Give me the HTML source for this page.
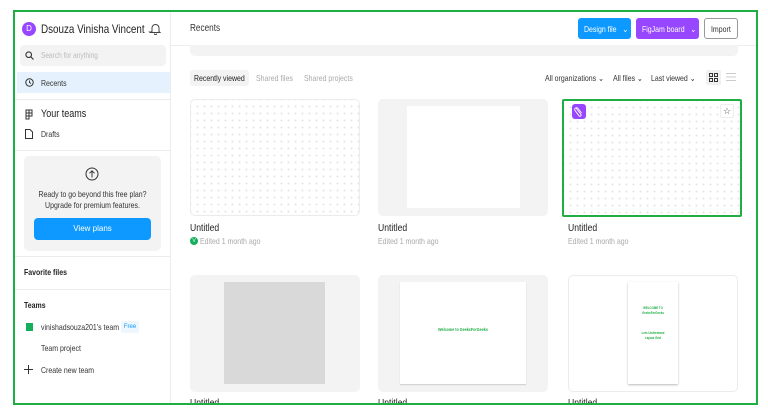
<!DOCTYPE html>
<html><head><meta charset="utf-8"><style>
*{box-sizing:border-box;margin:0;padding:0}
body{width:768px;height:415px;background:#fff;font-family:"Liberation Sans",Arial,sans-serif;color:#333;position:relative;overflow:hidden}
.a{position:absolute}
.t{position:absolute;white-space:nowrap;line-height:1;transform:scaleX(.82);transform-origin:left center}
.c{transform-origin:center center}
.dots{background-color:#fff;background-image:radial-gradient(circle,#e6e6e6 0.8px,transparent 1.2px);background-size:7px 7px;background-position:3px 3px}
.hl{position:absolute;left:15px;width:155px;height:1px;background:#ececec}
</style></head><body>
<div class="a" style="left:13px;top:10px;width:745px;height:395px;border:2px solid #1fae44"></div>
<div class="a" style="left:170px;top:12px;width:1px;height:391px;background:#ececec"></div>
<div class="a" style="left:171px;top:45px;width:585px;height:1px;background:#ececec"></div>

<div class="a" style="left:22px;top:22px;width:14px;height:14px;border-radius:50%;background:#9747ff;color:#fff;font-size:8px;text-align:center;line-height:14px">D</div>
<div class="t" style="left:41px;top:23px;font-size:12px;color:#222">Dsouza Vinisha Vincent <span style="font-size:8px">⌄</span></div>
<svg class="a" style="left:150px;top:23px" width="11" height="12" viewBox="0 0 11 12"><path d="M2 8.5V5a3.5 3.5 0 0 1 7 0v3.5l1 1H1z M4.3 10.5a1.2 1.2 0 0 0 2.4 0" fill="none" stroke="#444" stroke-width="1"/></svg>
<div class="a" style="left:20px;top:45px;width:146px;height:21px;background:#f3f3f3;border-radius:4px"></div>
<svg class="a" style="left:25px;top:51px" width="9" height="9" viewBox="0 0 9 9"><circle cx="3.7" cy="3.7" r="2.8" fill="none" stroke="#333" stroke-width="1.1"/><path d="M5.8 5.8L8.5 8.5" stroke="#333" stroke-width="1.1"/></svg>
<div class="t" style="left:41px;top:52px;font-size:8px;color:#bbb">Search for anything</div>
<div class="a" style="left:17px;top:72px;width:153px;height:21px;background:#e5f2fd"></div>
<svg class="a" style="left:25px;top:78px" width="9" height="9" viewBox="0 0 9 9"><circle cx="4.5" cy="4.5" r="3.7" fill="none" stroke="#333" stroke-width="1"/><path d="M4.5 2.5v2l1.5 1" fill="none" stroke="#333" stroke-width="1"/></svg>
<div class="t" style="left:41px;top:79px;font-size:8.5px">Recents</div>
<div class="hl" style="top:99px"></div>
<svg class="a" style="left:25px;top:109px" width="8" height="11" viewBox="0 0 8 11"><path d="M1 1h6v3H1z M1 4h6v3H1z M1 7h3v3H1z M4 1v6" fill="none" stroke="#333" stroke-width="1"/></svg>
<div class="t" style="left:41px;top:109px;font-size:11px;color:#222">Your teams</div>
<svg class="a" style="left:25px;top:129px" width="8" height="10" viewBox="0 0 8 10"><path d="M0.5 0.5h4.5l2.5 2.5v6.5h-7z" fill="none" stroke="#333" stroke-width="1"/></svg>
<div class="t" style="left:41px;top:130px;font-size:8.5px">Drafts</div>
<div class="hl" style="top:150px"></div>
<div class="a" style="left:24px;top:156px;width:137px;height:95px;background:#f3f3f3;border-radius:5px"></div>
<svg class="a" style="left:85px;top:167px" width="14" height="14" viewBox="0 0 14 14"><circle cx="7" cy="7" r="6" fill="none" stroke="#333" stroke-width="1"/><path d="M7 10.5V4M4.5 6.3L7 3.8l2.5 2.5" fill="none" stroke="#333" stroke-width="1"/></svg>
<div class="t c" style="left:14px;width:157px;text-align:center;top:190px;font-size:8.5px">Ready to go beyond this free plan?</div>
<div class="t c" style="left:14px;width:157px;text-align:center;top:201px;font-size:8.5px">Upgrade for premium features.</div>
<div class="a" style="left:34px;top:218px;width:117px;height:22px;background:#0d99ff;border-radius:4px;color:#fff;font-size:8px;text-align:center;line-height:22px">View plans</div>
<div class="hl" style="top:256px"></div>
<div class="t" style="left:24px;top:268px;font-size:8.5px;font-weight:bold;color:#222">Favorite files</div>
<div class="hl" style="top:289px"></div>
<div class="t" style="left:24px;top:301px;font-size:8.5px;font-weight:bold;color:#222">Teams</div>
<div class="a" style="left:26px;top:323px;width:7px;height:8px;background:#14ae5c"></div>
<div class="t" style="left:41px;top:323px;font-size:8.5px">vinishadsouza201's team</div>
<div class="a" style="left:121px;top:321px;width:18px;height:12px;background:#eef6fe;border-radius:2px;color:#0d99ff;font-size:6px;text-align:center;line-height:12px">Free</div>
<div class="t" style="left:41px;top:344px;font-size:8.5px">Team project</div>
<div class="a" style="left:24px;top:369px;width:9px;height:1px;background:#333"></div>
<div class="a" style="left:28px;top:365px;width:1px;height:9px;background:#333"></div>
<div class="t" style="left:41px;top:366px;font-size:8.5px">Create new team</div>

<div class="t" style="left:190px;top:24px;font-size:10px;color:#333">Recents</div>
<div class="a" style="left:578px;top:18px;width:53px;height:21px;background:#0d99ff;border-radius:3px"></div>
<div class="t" style="left:584px;top:25px;font-size:8.5px;color:#fff">Design file &nbsp; ⌄</div>
<div class="a" style="left:636px;top:18px;width:63px;height:21px;background:#9747ff;border-radius:3px"></div>
<div class="t" style="left:642px;top:25px;font-size:8.5px;color:#fff">FigJam board &nbsp; ⌄</div>
<div class="a" style="left:704px;top:18px;width:34px;height:21px;border:1px solid #999;border-radius:3px"></div>
<div class="t" style="left:711px;top:25px;font-size:8.5px">Import</div>
<div class="a" style="left:190px;top:45px;width:548px;height:11px;background:#f3f3f3;border-radius:0 0 5px 5px"></div>

<div class="a" style="left:190px;top:70px;width:59px;height:16px;background:#f3f3f3;border-radius:3px"></div>
<div class="t" style="left:194px;top:74px;font-size:8.5px;color:#222">Recently viewed</div>
<div class="t" style="left:256px;top:74px;font-size:8.5px;color:#aaa">Shared files</div>
<div class="t" style="left:304px;top:74px;font-size:8.5px;color:#aaa">Shared projects</div>
<div class="t" style="left:545px;top:74px;font-size:8.5px">All organizations ⌄</div>
<div class="t" style="left:613px;top:74px;font-size:8.5px">All files ⌄</div>
<div class="t" style="left:651px;top:74px;font-size:8.5px">Last viewed ⌄</div>
<div class="a" style="left:706px;top:70px;width:15px;height:15px;background:#f0f0f0;border-radius:2px"></div>
<svg class="a" style="left:709px;top:73px" width="9" height="9" viewBox="0 0 9 9"><rect x=".5" y=".5" width="3" height="3" fill="none" stroke="#333"/><rect x="5.5" y=".5" width="3" height="3" fill="none" stroke="#333"/><rect x=".5" y="5.5" width="3" height="3" fill="none" stroke="#333"/><rect x="5.5" y="5.5" width="3" height="3" fill="none" stroke="#333"/></svg>
<svg class="a" style="left:726px;top:72px" width="10" height="10" viewBox="0 0 10 10"><path d="M0 1.5h10M0 5h10M0 8.5h10" stroke="#bbb" stroke-width="0.8"/></svg>

<div class="a dots" style="left:190px;top:99px;width:170px;height:117px;border:1px solid #ececec;border-radius:5px"></div>
<div class="a" style="left:378px;top:99px;width:170px;height:117px;background:#f3f3f3;border-radius:5px"></div>
<div class="a" style="left:407px;top:106px;width:113px;height:102px;background:#fff"></div>
<div class="a dots" style="left:562px;top:99px;width:180px;height:118px;border:2px solid #1fae44;border-radius:2px"></div>
<div class="a" style="left:572px;top:104px;width:14px;height:15px;background:#9747ff;border-radius:3px"></div>
<svg class="a" style="left:574px;top:106px" width="10" height="11" viewBox="0 0 10 11"><path d="M2 2l5 6.5a1.2 1.2 0 0 1-2 1.3L1 4.5a1.8 1.8 0 0 1 3-2l3.5 4.5" fill="none" stroke="#fff" stroke-width="0.9"/></svg>
<div class="a" style="left:720px;top:104px;width:14px;height:14px;background:#fff;border:1px solid #eee;border-radius:2px;font-size:9px;text-align:center;line-height:12px;color:#555">☆</div>

<div class="t" style="left:190px;top:223px;font-size:10.5px;color:#222">Untitled</div>
<div class="a" style="left:190px;top:237px;width:8px;height:8px;border-radius:50%;background:#14ae5c;color:#fff;font-size:5px;text-align:center;line-height:8px">V</div>
<div class="t" style="left:200px;top:237px;font-size:8.5px;color:#aaa">Edited 1 month ago</div>
<div class="t" style="left:378px;top:223px;font-size:10.5px;color:#222">Untitled</div>
<div class="t" style="left:378px;top:237px;font-size:8.5px;color:#aaa">Edited 1 month ago</div>
<div class="t" style="left:568px;top:223px;font-size:10.5px;color:#222">Untitled</div>
<div class="t" style="left:568px;top:237px;font-size:8.5px;color:#aaa">Edited 1 month ago</div>

<div class="a" style="left:190px;top:275px;width:170px;height:117px;background:#f3f3f3;border-radius:5px"></div>
<div class="a" style="left:224px;top:282px;width:101px;height:102px;background:#d9d9d9"></div>
<div class="a" style="left:378px;top:275px;width:170px;height:117px;background:#f3f3f3;border-radius:5px"></div>
<div class="a" style="left:400px;top:282px;width:126px;height:102px;background:#fff;box-shadow:0 1px 1px #ccc"></div>
<div class="t c" style="left:400px;width:126px;text-align:center;top:328px;font-size:4.5px;font-weight:bold;color:#1fae44">Welcome to GeeksForGeeks</div>
<div class="a" style="left:568px;top:275px;width:170px;height:117px;background:#fff;border:1px solid #ececec;border-radius:5px"></div>
<div class="a" style="left:628px;top:282px;width:50px;height:102px;background:#fff;box-shadow:0 1px 2px #bbb"></div>
<div class="t c" style="left:628px;width:50px;text-align:center;top:306px;font-size:3.5px;font-weight:bold;color:#1fae44;line-height:5px;white-space:normal">WELCOME TO<br>GeeksForGeeks</div>
<div class="t c" style="left:628px;width:50px;text-align:center;top:331px;font-size:3.5px;font-weight:bold;color:#1fae44;line-height:5px;white-space:normal">Lets Understand<br>Layout Grid</div>
<div class="t" style="left:190px;top:398px;font-size:10.5px;color:#222">Untitled</div>
<div class="t" style="left:378px;top:398px;font-size:10.5px;color:#222">Untitled</div>
<div class="t" style="left:568px;top:398px;font-size:10.5px;color:#222">Untitled</div>
<div class="a" style="left:0;top:405px;width:768px;height:10px;background:#fff"></div>
<div class="a" style="left:13px;top:403px;width:745px;height:2px;background:#1fae44"></div>
</body></html>
